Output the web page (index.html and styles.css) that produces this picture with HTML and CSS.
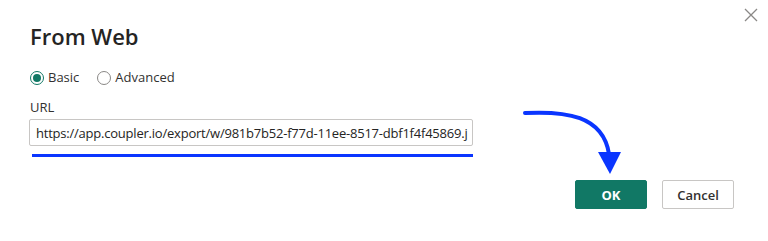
FILE: index.html
```html
<!DOCTYPE html>
<html>
<head>
<meta charset="utf-8">
<link rel="stylesheet" href="styles.css">
</head>
<body>
<div class="dialog">
  <button class="close" aria-label="Close">
    <svg width="14" height="14" viewBox="0 0 14 14"><path d="M1 1L13 13M13 1L1 13" stroke="#8a8886" stroke-width="1.3" fill="none"/></svg>
  </button>
  <h1 class="title">From Web</h1>
  <div class="radios">
    <label class="radio"><span class="dot checked"></span><span>Basic</span></label>
    <label class="radio"><span class="dot"></span><span>Advanced</span></label>
  </div>
  <div class="field-label">URL</div>
  <div class="input"><span class="value">https://app.coupler.io/export/w/981b7b52-f77d-11ee-8517-dbf1f4f45869.j</span></div>
  <div class="underline"></div>
  <div class="actions">
    <button class="btn primary">OK</button>
    <button class="btn secondary">Cancel</button>
  </div>
  <svg class="arrow" width="115" height="80" viewBox="0 0 115 80">
    <path d="M10 13 C 50 11, 88 15, 94 54" stroke="#0a35ff" stroke-width="4" fill="none" stroke-linecap="round"/>
    <path d="M83 52 L106 52 L95 74 Z" fill="#0a35ff"/>
  </svg>
</div>
</body>
</html>
```

FILE: styles.css
```css
* { box-sizing: border-box; }
html, body { margin: 0; padding: 0; background: #fff; }
body {
  width: 768px;
  height: 241px;
  overflow: hidden;
  font-family: "Open Sans", "Noto Sans", sans-serif;
  color: #323130;
}
.dialog {
  position: relative;
  padding: 21px 34px 0 30px;
}
.close {
  position: absolute;
  left: 743px;
  top: 7px;
  width: 16px;
  height: 16px;
  padding: 1px;
  border: 0;
  background: none;
  display: flex;
}
.title {
  margin: 0;
  font-size: 22px;
  line-height: 30px;
  font-weight: 600;
  color: #252423;
}
.radios {
  display: flex;
  gap: 18px;
  margin-top: 17px;
  height: 18px;
  align-items: center;
}
.radio {
  display: flex;
  align-items: center;
  gap: 4px;
  font-size: 13px;
  line-height: 18px;
}
.dot {
  width: 14px;
  height: 14px;
  border-radius: 50%;
  border: 1px solid #8a8886;
  display: flex;
  align-items: center;
  justify-content: center;
  margin-top: 2px;
}
.dot.checked { border-color: #117865; }
.dot.checked::after {
  content: "";
  width: 8px;
  height: 8px;
  border-radius: 50%;
  background: #117865;
}
.field-label {
  margin-top: 12px;
  font-size: 13px;
  line-height: 18px;
}
.input {
  margin-top: 3px;
  margin-left: -1px;
  width: 444px;
  height: 27px;
  border: 1px solid #c8c6c4;
  border-radius: 2px;
  padding: 0 0 0 6px;
  display: flex;
  align-items: center;
  overflow: hidden;
  white-space: nowrap;
  font-size: 13px;
  letter-spacing: -0.22px;
  color: #252423;
}
.underline {
  margin-top: 8px;
  margin-left: 2px;
  width: 441px;
  height: 3px;
  background: #0a35ff;
}
.actions {
  display: flex;
  justify-content: flex-end;
  gap: 15px;
  margin-top: 23px;
}
.btn {
  width: 72px;
  height: 29px;
  border-radius: 2px;
  font-family: "Open Sans", "Noto Sans", sans-serif;
  font-size: 13px;
  font-weight: 600;
  padding: 0;
}
.primary {
  background: #117865;
  border: 1px solid #117865;
  color: #fff;
  font-weight: 700;
}
.secondary {
  background: #fff;
  border: 1px solid #c8c6c4;
  color: #323130;
}
.arrow {
  position: absolute;
  left: 515px;
  top: 100px;
}
```
